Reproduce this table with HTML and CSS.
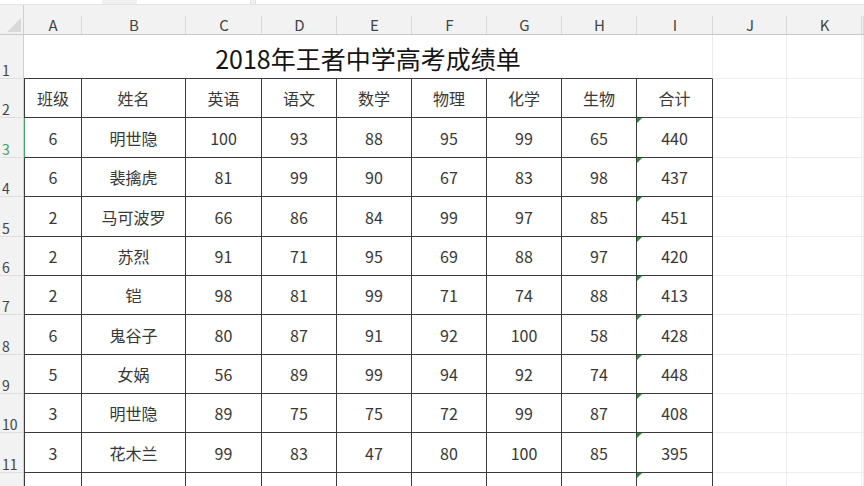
FILE: index.html
```html
<!DOCTYPE html>
<html lang="zh-CN">
<head>
<meta charset="utf-8">
<title>2018年王者中学高考成绩单</title>
<link rel="stylesheet" href="styles.css">
</head>
<body>
<div class="topbar">
  <div class="tab w1"></div>
  <div class="gap g1"></div>
  <div class="tab w2"></div>
  <div class="gap g2"></div>
  <div class="tab w3"></div>
</div>
<div class="sheet">
  <div class="corner"><span class="tri"></span></div>
  <div class="ch">A</div><div class="ch">B</div><div class="ch">C</div><div class="ch">D</div><div class="ch">E</div><div class="ch">F</div><div class="ch">G</div><div class="ch">H</div><div class="ch">I</div><div class="ch">J</div><div class="ch">K</div><div class="ch"></div>

  <div class="rh">1</div>
  <div class="title">2018年王者中学高考成绩单</div>
  <div class="c"></div><div class="c"></div><div class="c"></div>

  <div class="rh">2</div>
  <div class="t a">班级</div><div class="t">姓名</div><div class="t">英语</div><div class="t">语文</div><div class="t">数学</div><div class="t">物理</div><div class="t">化学</div><div class="t">生物</div><div class="t">合计</div>
  <div class="c"></div><div class="c"></div><div class="c"></div>

  <div class="rh sel">3</div>
  <div class="t a cur">6</div><div class="t">明世隐</div><div class="t">100</div><div class="t">93</div><div class="t">88</div><div class="t">95</div><div class="t">99</div><div class="t">65</div><div class="t g">440</div>
  <div class="c"></div><div class="c"></div><div class="c"></div>

  <div class="rh">4</div>
  <div class="t a">6</div><div class="t">裴擒虎</div><div class="t">81</div><div class="t">99</div><div class="t">90</div><div class="t">67</div><div class="t">83</div><div class="t">98</div><div class="t g">437</div>
  <div class="c"></div><div class="c"></div><div class="c"></div>

  <div class="rh">5</div>
  <div class="t a">2</div><div class="t">马可波罗</div><div class="t">66</div><div class="t">86</div><div class="t">84</div><div class="t">99</div><div class="t">97</div><div class="t">85</div><div class="t g">451</div>
  <div class="c"></div><div class="c"></div><div class="c"></div>

  <div class="rh">6</div>
  <div class="t a">2</div><div class="t">苏烈</div><div class="t">91</div><div class="t">71</div><div class="t">95</div><div class="t">69</div><div class="t">88</div><div class="t">97</div><div class="t g">420</div>
  <div class="c"></div><div class="c"></div><div class="c"></div>

  <div class="rh">7</div>
  <div class="t a">2</div><div class="t">铠</div><div class="t">98</div><div class="t">81</div><div class="t">99</div><div class="t">71</div><div class="t">74</div><div class="t">88</div><div class="t g">413</div>
  <div class="c"></div><div class="c"></div><div class="c"></div>

  <div class="rh">8</div>
  <div class="t a">6</div><div class="t">鬼谷子</div><div class="t">80</div><div class="t">87</div><div class="t">91</div><div class="t">92</div><div class="t">100</div><div class="t">58</div><div class="t g">428</div>
  <div class="c"></div><div class="c"></div><div class="c"></div>

  <div class="rh">9</div>
  <div class="t a">5</div><div class="t">女娲</div><div class="t">56</div><div class="t">89</div><div class="t">99</div><div class="t">94</div><div class="t">92</div><div class="t">74</div><div class="t g">448</div>
  <div class="c"></div><div class="c"></div><div class="c"></div>

  <div class="rh">10</div>
  <div class="t a">3</div><div class="t">明世隐</div><div class="t">89</div><div class="t">75</div><div class="t">75</div><div class="t">72</div><div class="t">99</div><div class="t">87</div><div class="t g">408</div>
  <div class="c"></div><div class="c"></div><div class="c"></div>

  <div class="rh">11</div>
  <div class="t a">3</div><div class="t">花木兰</div><div class="t">99</div><div class="t">83</div><div class="t">47</div><div class="t">80</div><div class="t">100</div><div class="t">85</div><div class="t g">395</div>
  <div class="c"></div><div class="c"></div><div class="c"></div>

  <div class="rh"></div>
  <div class="t a"></div><div class="t"></div><div class="t"></div><div class="t"></div><div class="t"></div><div class="t"></div><div class="t"></div><div class="t"></div><div class="t g"></div>
  <div class="c"></div><div class="c"></div><div class="c"></div>
</div>
</body>
</html>
```
FILE: styles.css
```css
html, body {
  margin: 0;
  padding: 0;
  background: #ffffff;
  overflow: hidden;
}
body {
  width: 864px;
  height: 486px;
  font-family: "Noto Sans CJK SC", "Noto Sans", sans-serif;
}

.topbar {
  display: flex;
  height: 4px;
  border-bottom: 1px solid #e2e2e2;
  background: #f0f0f0;
}
.topbar .tab { background: #ffffff; }
.topbar .w1 { width: 102px; }
.topbar .g1 { width: 35px; }
.topbar .w2 { width: 113px; border-right: 1px solid #e2e2e2; }
.topbar .g2 { width: 4px; }
.topbar .w3 { flex: 1; border-left: 1px solid #e2e2e2; }

.sheet {
  display: grid;
  grid-template-columns: 24px 58px 104px 76px 75px 75px 75px 75px 75px 76px 74px 75px 1fr;
  grid-template-rows: 30px 44px 39px 40px 39px 40px 39px 39px 40px 39px 39px 40px 14px;
  height: 481px;
  overflow: hidden;
}
.sheet > div { box-sizing: border-box; }

.corner {
  background: #f2f2f2;
  border-right: 1px solid #cfcfcf;
  border-bottom: 1px solid #c8c8c8;
  display: flex;
  justify-content: flex-end;
  align-items: flex-end;
  padding: 0 2px 2px 0;
}
.corner .tri {
  width: 0;
  height: 0;
  border-left: 14px solid transparent;
  border-bottom: 14px solid #d9d9d9;
}

.ch {
  background: linear-gradient(#d8d8d8, #d8d8d8) right bottom / 1px 62% no-repeat, #f2f2f2;
  border-bottom: 1px solid #c8c8c8;
  display: flex;
  justify-content: center;
  align-items: flex-end;
  font-size: 15px;
  line-height: 18px;
  color: #444444;
  padding-bottom: 0;
}

.rh {
  background: #f2f2f2;
  border-right: 1px solid #cfcfcf;
  border-bottom: 1px solid #dedede;
  display: flex;
  align-items: flex-end;
  font-size: 14px;
  line-height: 16px;
  color: #444444;
  padding: 0 0 0 2px;
}
.rh.sel { color: #4c9a6a; }

.title {
  grid-column: span 9;
  border-bottom: 1px solid #3a3a3a;
  border-right: 1px solid #ebebeb;
  display: flex;
  justify-content: center;
  align-items: center;
  font-size: 25px;
  color: #141414;
  padding-top: 2px;
}

.c {
  border-right: 1px solid #ededed;
  border-bottom: 1px solid #ededed;
}

.t {
  position: relative;
  border-right: 1px solid #3a3a3a;
  border-bottom: 1px solid #3a3a3a;
  display: flex;
  justify-content: center;
  align-items: center;
  font-size: 16px;
  color: #383838;
}
.t.a { border-left: 1px solid #3a3a3a; }
.t.cur { border-left: 1px solid #4aa46d; }
.t.g::before {
  content: "";
  position: absolute;
  left: 0;
  top: 0;
  width: 0;
  height: 0;
  border-top: 5px solid #1f8f2c;
  border-right: 5px solid transparent;
}
```
